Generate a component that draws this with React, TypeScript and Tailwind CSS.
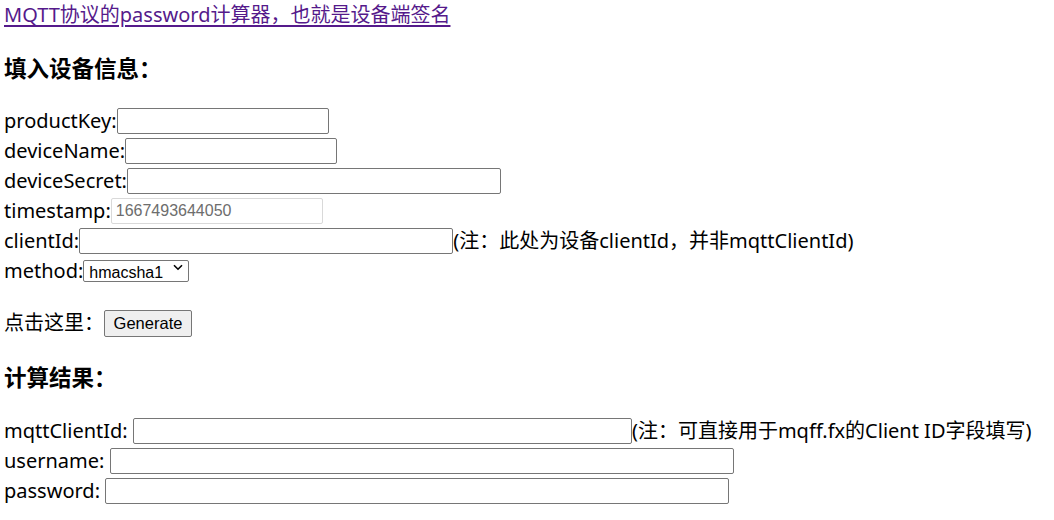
import { useState } from 'react'

const font = 'font-["Microsoft_YaHei","Noto_Sans","Noto_Sans_CJK_SC",sans-serif]'
const inputCls = 'h-[26px] border border-[#767676] rounded-[2px] bg-white px-[3px] text-[16px] font-["Liberation_Sans",Arial,sans-serif] outline-none'

function Row({ children }: { children: React.ReactNode }) {
  return <div className="flex h-[30px] items-center whitespace-pre">{children}</div>
}

export default function App() {
  const [productKey, setProductKey] = useState('')
  const [deviceName, setDeviceName] = useState('')
  const [deviceSecret, setDeviceSecret] = useState('')
  const [clientId, setClientId] = useState('')
  const [method, setMethod] = useState('hmacsha1')

  return (
    <div className={`${font} text-[20px] text-black bg-white min-h-[520px] px-[4px]`}>
      <Row>
        <a href="#" className="text-[#551a8b] underline underline-offset-[3px]">MQTT协议的password计算器，也就是设备端签名</a>
      </Row>

      <h3 className="mt-[24px] h-[30px] flex items-center text-[22.5px] font-bold">填入设备信息：</h3>

      <div className="mt-[22px]">
        <Row>
          <span>productKey:</span>
          <input className={`${inputCls} w-[212px]`} value={productKey} onChange={(e) => setProductKey(e.target.value)} />
        </Row>
        <Row>
          <span>deviceName:</span>
          <input className={`${inputCls} w-[212px]`} value={deviceName} onChange={(e) => setDeviceName(e.target.value)} />
        </Row>
        <Row>
          <span>deviceSecret:</span>
          <input className={`${inputCls} w-[374px]`} value={deviceSecret} onChange={(e) => setDeviceSecret(e.target.value)} />
        </Row>
        <Row>
          <span>timestamp:</span>
          <input
            disabled
            className={`${inputCls} w-[212px] bg-[#f8f8f8] border-[#d9d9d9] text-[#6d6d6d] pl-[4px] text-[16.5px]`}
            value="1667493644050"
            readOnly
          />
        </Row>
        <Row>
          <span>clientId:</span>
          <input className={`${inputCls} w-[374px]`} value={clientId} onChange={(e) => setClientId(e.target.value)} />
          <span>(注：此处为设备clientId，并非mqttClientId)</span>
        </Row>
        <Row>
          <span>method:</span>
          <div className="relative">
            <select
              className='appearance-none h-[22px] w-[106px] border border-[#767676] rounded-[2px] bg-white pl-[5px] text-[16px] font-["Liberation_Sans",Arial,sans-serif] outline-none'
              value={method}
              onChange={(e) => setMethod(e.target.value)}
            >
              <option value="hmacsha1">hmacsha1</option>
              <option value="hmacmd5">hmacmd5</option>
              <option value="hmacsha256">hmacsha256</option>
            </select>
            <svg className="pointer-events-none absolute right-[6px] top-[8px]" width="10" height="7" viewBox="0 0 10 7">
              <path d="M1 1.2 L5 5.2 L9 1.2" fill="none" stroke="#000" strokeWidth="1.6" />
            </svg>
          </div>
        </Row>
      </div>

      <div className="mt-[22px]">
        <Row>
          <span>点击这里：</span>
          <button className='h-[27px] w-[88px] border border-[#767676] rounded-[2px] bg-[#efefef] text-[16.5px] font-["Liberation_Sans",Arial,sans-serif]'>
            Generate
          </button>
        </Row>
      </div>

      <h3 className="mt-[25px] h-[30px] flex items-center text-[22.5px] font-bold">计算结果：</h3>

      <div className="mt-[23px]">
        <Row>
          <span>mqttClientId: </span>
          <input className={`${inputCls} w-[499px]`} readOnly />
          <span>(注：可直接用于mqff.fx的Client ID字段填写)</span>
        </Row>
        <Row>
          <span>username: </span>
          <input className={`${inputCls} w-[624px]`} readOnly />
        </Row>
        <Row>
          <span>password: </span>
          <input className={`${inputCls} w-[624px]`} readOnly />
        </Row>
      </div>
    </div>
  )
}
